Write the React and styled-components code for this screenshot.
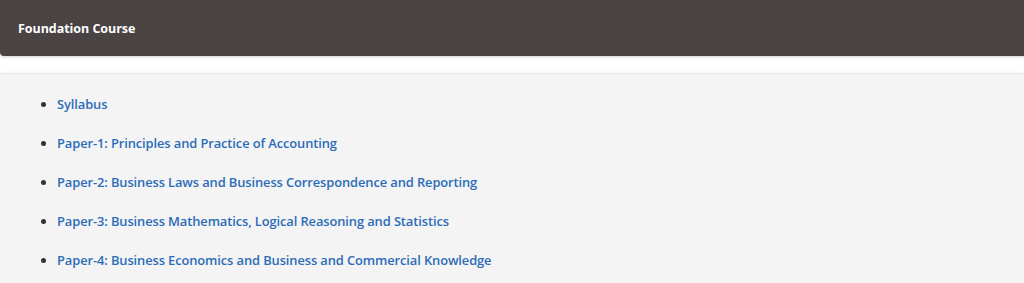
import React from "react";
import styled, { createGlobalStyle } from "styled-components";

const Global = createGlobalStyle`
  html, body { margin: 0; padding: 0; background: #ffffff; }
  body { font-family: "Open Sans", "Noto Sans", sans-serif; }
`;

const Page = styled.div`
  display: flex;
  flex-direction: column;
  gap: 17px;
  width: 1024px;
`;

const Header = styled.div`
  height: 56px;
  background: #4a4343;
  border-radius: 0 0 4px 4px;
  margin-right: -8px;
  box-shadow: 0 1px 3px rgba(0, 0, 0, 0.18);
  display: flex;
  align-items: center;
  padding-left: 18px;
`;

const Title = styled.h2`
  margin: 0;
  color: #ffffff;
  font-size: 12.5px;
  font-weight: 700;
  letter-spacing: -0.05px;
`;

const Panel = styled.div`
  background: #f4f4f4;
  border-top: 1px solid #e6e6e6;
  box-shadow: 0 -1px 2px rgba(0, 0, 0, 0.05);
  padding: 11px 0 0 0;
  height: 200px;
`;

const List = styled.ul`
  margin: 0;
  padding: 0 0 0 57px;
  list-style: disc;
  color: #333;
`;

const Item = styled.li`
  height: 39px;
  line-height: 39px;
  font-size: 12.9px;
  &::marker { font-size: 13px; }
`;

const Link = styled.a`
  color: #2b6cb8;
  font-weight: 600;
  text-decoration: none;
  letter-spacing: -0.1px;
`;

const items = [
  "Syllabus",
  "Paper-1: Principles and Practice of Accounting",
  "Paper-2: Business Laws and Business Correspondence and Reporting",
  "Paper-3: Business Mathematics, Logical Reasoning and Statistics",
  "Paper-4: Business Economics and Business and Commercial Knowledge",
];

export default function App() {
  return (
    <>
      <Global />
      <Page>
        <Header>
          <Title>Foundation Course</Title>
        </Header>
        <Panel>
          <List>
            {items.map((t) => (
              <Item key={t}>
                <Link href="#">{t}</Link>
              </Item>
            ))}
          </List>
        </Panel>
      </Page>
    </>
  );
}
